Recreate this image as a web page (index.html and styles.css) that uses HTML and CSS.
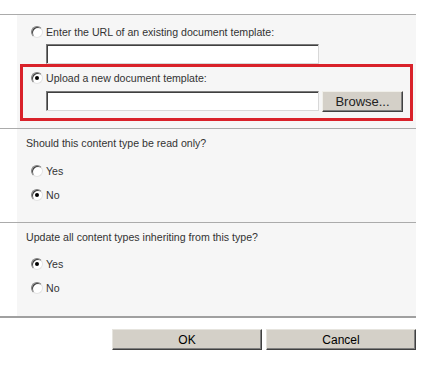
FILE: index.html
```html
<!DOCTYPE html>
<html lang="en">
<head>
    <meta charset="UTF-8">
    <title>Content Type Settings</title>
    <link rel="stylesheet" href="styles.css">
</head>
<body>
    <div class="form">
        <div class="section">
            <div class="section-body template">
                <label class="option">
                    <span class="radio"></span>
                    Enter the URL of an existing document template:
                </label>
                <div class="field url-field"></div>

                <div class="highlight">
                    <label class="option">
                        <span class="radio checked"></span>
                        Upload a new document template:
                    </label>
                    <div class="upload-row">
                        <div class="field"></div>
                        <button class="browse">Browse...</button>
                    </div>
                </div>
            </div>
        </div>

        <div class="section">
            <div class="section-body">
                <div class="question">Should this content type be read only?</div>
                <div class="choices">
                    <label class="option"><span class="radio"></span>Yes</label>
                    <label class="option"><span class="radio checked"></span>No</label>
                </div>
            </div>
        </div>

        <div class="section last">
            <div class="section-body">
                <div class="question">Update all content types inheriting from this type?</div>
                <div class="choices">
                    <label class="option"><span class="radio checked"></span>Yes</label>
                    <label class="option"><span class="radio"></span>No</label>
                </div>
            </div>
        </div>

        <div class="actions">
            <button class="action">OK</button>
            <button class="action">Cancel</button>
        </div>
    </div>
</body>
</html>
```

FILE: styles.css
```css
body {
    margin: 0;
    background: #fff;
    font-family: 'Liberation Sans', Arial, sans-serif;
    font-size: 10.6px;
    color: #333;
}
.form {
    width: 416px;
    padding-top: 14px;
}
.section {
    border-top: 1px solid #ababab;
    padding-left: 17px;
}
.section.last {
    border-bottom: 2px solid #a0a0a0;
}
.section-body {
    background: #f6f6f6;
    padding: 7px 0 20px 9px;
}
.section.last .section-body {
    padding-bottom: 21px;
}
.section-body.template {
    padding: 10px 0 7px 0;
}
.option {
    display: flex;
    align-items: center;
    height: 14px;
    line-height: 14px;
    padding-left: 14px;
}
.radio {
    width: 12px;
    height: 12px;
    box-sizing: border-box;
    margin-right: 3px;
    border-radius: 50%;
    border: 1px solid;
    border-color: #808080 #e4e4e4 #e4e4e4 #808080;
    background: #fff;
    box-shadow: inset 1px 1px 0 #404040;
    position: relative;
}
.radio.checked::after {
    content: "";
    position: absolute;
    left: 3px;
    top: 3px;
    width: 4px;
    height: 4px;
    border-radius: 50%;
    background: #000;
}
.field {
    width: 273px;
    height: 20px;
    box-sizing: border-box;
    background: #fff;
    border: 1px solid;
    border-color: #7a7a7a #d8d8d8 #d8d8d8 #7a7a7a;
    box-shadow: inset 1px 1px 0 #404040;
}
.url-field {
    margin: 5px 0 0 29px;
}
.highlight {
    margin-left: 3px;
    width: 393px;
    box-sizing: border-box;
    border: 3px solid #d9222a;
    padding: 4px 0 6px 0;
}
.highlight .option {
    padding-left: 8px;
}
.upload-row {
    display: flex;
    gap: 3px;
    margin: 6px 0 0 23px;
}
.browse {
    width: 81px;
    height: 21px;
    padding: 0;
    background: #d4d0c8;
    border: 1px solid;
    border-color: #f0efe9 #404040 #404040 #f0efe9;
    box-shadow: inset -1px -1px 0 #808080;
    font-family: 'Liberation Sans', Arial, sans-serif;
    font-size: 13px;
    color: #222;
}
.question {
    height: 14px;
    line-height: 14px;
}
.choices {
    display: flex;
    flex-direction: column;
    gap: 10px;
    margin-top: 14px;
    margin-left: -9px;
}
.section.last .choices {
    margin-top: 13px;
}
.actions {
    display: flex;
    justify-content: flex-end;
    gap: 4px;
    margin-top: 11px;
}
.action {
    width: 150px;
    height: 21px;
    padding: 0;
    background: #d4d0c8;
    border: 1px solid;
    border-color: #e6e4de #404040 #404040 #e6e4de;
    box-shadow: inset -1px -1px 0 #808080;
    font-family: 'Liberation Sans', Arial, sans-serif;
    font-size: 12px;
    color: #000;
}
```
